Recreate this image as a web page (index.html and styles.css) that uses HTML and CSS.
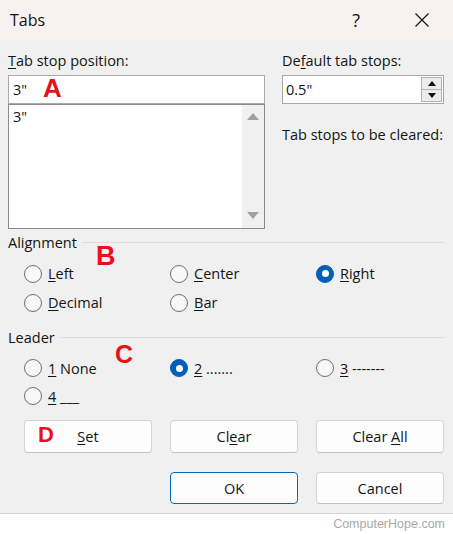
FILE: index.html
```html
<!DOCTYPE html>
<html lang="en">
    <head>
        <meta charset="UTF-8">
        <meta name="viewport" content="width=device-width, initial-scale=1.0">
        <title>Tabs</title>
        <link rel="stylesheet" href="styles.css">
    </head>
    <body>
        <div class="dialog">
            <div class="titlebar">
                <span class="title">Tabs</span>
                <span class="help">?</span>
                <span class="close">
                    <svg width="16" height="16" viewBox="0 0 16 16">
                        <path d="M1.5 1.5 L14.5 14.5 M14.5 1.5 L1.5 14.5" stroke="#1a1a1a" stroke-width="1.3" fill="none"/>
                    </svg>
                </span>
            </div>

            <div class="content">
                <div class="top">
                    <div class="col">
                        <div class="label"><u>T</u>ab stop position:</div>
                        <div class="textbox">3"</div>
                        <div class="listbox">
                            <div class="list-items">3"</div>
                            <div class="scrollbar">
                                <span class="tri-up"></span>
                                <span class="tri-down"></span>
                            </div>
                        </div>
                    </div>
                    <div class="col">
                        <div class="label">De<u>f</u>ault tab stops:</div>
                        <div class="spin">
                            <span class="spin-value">0.5"</span>
                            <div class="spin-buttons">
                                <span class="spin-btn"><span class="tri-up small"></span></span>
                                <span class="spin-btn"><span class="tri-down small"></span></span>
                            </div>
                        </div>
                        <div class="label cleared">Tab stops to be cleared:</div>
                    </div>
                </div>

                <div class="group-head"><span>Alignment</span><span class="rule"></span></div>
                <div class="radio-grid align-grid">
                    <div class="radio"><span class="dot"></span><span><u>L</u>eft</span></div>
                    <div class="radio"><span class="dot"></span><span><u>C</u>enter</span></div>
                    <div class="radio"><span class="dot checked"></span><span><u>R</u>ight</span></div>
                    <div class="radio"><span class="dot"></span><span><u>D</u>ecimal</span></div>
                    <div class="radio"><span class="dot"></span><span><u>B</u>ar</span></div>
                </div>

                <div class="group-head leader-head"><span>Leader</span><span class="rule"></span></div>
                <div class="radio-grid leader-grid">
                    <div class="radio"><span class="dot"></span><span><u>1</u> None</span></div>
                    <div class="radio"><span class="dot checked"></span><span><u>2</u> .......</span></div>
                    <div class="radio"><span class="dot"></span><span><u>3</u> -------</span></div>
                    <div class="radio"><span class="dot"></span><span><u>4</u> ___</span></div>
                </div>

                <div class="button-row">
                    <button class="btn"><u>S</u>et</button>
                    <button class="btn">Cl<u>e</u>ar</button>
                    <button class="btn">Clear <u>A</u>ll</button>
                </div>
                <div class="button-row ok-row">
                    <span></span>
                    <button class="btn primary">OK</button>
                    <button class="btn">Cancel</button>
                </div>
            </div>

            <div class="footer">ComputerHope.com</div>

            <!-- red callout letters drawn over the screenshot -->
            <span class="mark mark-a">A</span>
            <span class="mark mark-b">B</span>
            <span class="mark mark-c">C</span>
            <span class="mark mark-d">D</span>
        </div>
    </body>
</html>
```

FILE: styles.css
```css
*,
*::before,
*::after {
    box-sizing: border-box;
}

body {
    margin: 0;
    padding: 0;
    background-color: #f0f0f0;
    font-family: "Open Sans", "Noto Sans", sans-serif;
    font-size: 14.5px;
    color: #141414;
    overflow: hidden;
}

u {
    text-decoration-thickness: 1px;
    text-underline-offset: 2px;
}

.dialog {
    position: relative;
    width: 453px;
    height: 534px;
}

/* title bar */
.titlebar {
    display: flex;
    align-items: center;
    height: 40px;
    padding: 0 8px 0 10px;
    background-color: #f8f1f1;
}

.title {
    flex: 1;
    font-size: 16px;
}

.help {
    font-size: 18px;
    margin-right: 54px;
}

.close {
    display: flex;
    margin-right: 15px;
}

/* main area */
.content {
    padding: 11px 8px 9px;
    background-color: #f0f0f0;
}

.top {
    display: grid;
    grid-template-columns: 257px 162px;
    column-gap: 17px;
}

.label {
    height: 20px;
    line-height: 20px;
    margin-bottom: 4px;
    white-space: nowrap;
}

.label.cleared {
    margin-top: 21px;
}

.textbox {
    height: 29px;
    line-height: 27px;
    padding-left: 4px;
    background: #fff;
    border: 1px solid #a8a8a8;
}

.listbox {
    display: flex;
    height: 125px;
    background: #fff;
    border: 1px solid #8a8a8a;
}

.list-items {
    flex: 1;
    padding: 2px 0 0 4px;
    line-height: 20px;
}

.scrollbar {
    width: 22px;
    display: flex;
    flex-direction: column;
    justify-content: space-between;
    align-items: center;
    padding: 8px 0 9px;
    background: #f0f0f0;
}

.tri-up,
.tri-down {
    width: 0;
    height: 0;
    border-left: 6px solid transparent;
    border-right: 6px solid transparent;
}

.tri-up {
    border-bottom: 7px solid #a0a0a0;
}

.tri-down {
    border-top: 7px solid #a0a0a0;
}

.tri-up.small {
    border-left-width: 4px;
    border-right-width: 4px;
    border-bottom: 5px solid #111;
}

.tri-down.small {
    border-left-width: 4px;
    border-right-width: 4px;
    border-top: 5px solid #111;
}

.spin {
    display: flex;
    align-items: center;
    height: 29px;
    background: #fff;
    border: 1px solid #a8a8a8;
}

.spin-value {
    flex: 1;
    padding-left: 3px;
}

.spin-buttons {
    display: flex;
    flex-direction: column;
    width: 21px;
    margin-right: 1px;
    height: 25px;
}

.spin-btn {
    flex: 1;
    display: flex;
    align-items: center;
    justify-content: center;
    background: #ececec;
    border: 1px solid #b4b4b4;
}

.spin-btn + .spin-btn {
    border-top: none;
}

/* group headers */
.group-head {
    display: flex;
    align-items: center;
    height: 20px;
    margin-top: 3px;
}

.group-head .rule {
    flex: 1;
    height: 1px;
    margin-left: 5px;
    background: #dcdcdc;
}

.leader-head {
    margin-top: 10px;
}

/* radios */
.radio-grid {
    display: grid;
    grid-template-columns: 146px 146px 1fr;
    margin-top: 7px;
    padding-left: 16px;
}

.align-grid {
    grid-auto-rows: 29px;
}

.leader-grid {
    grid-auto-rows: 28px;
}

.radio {
    display: flex;
    align-items: center;
    gap: 6px;
    white-space: nowrap;
}

.dot {
    position: relative;
    width: 18px;
    height: 18px;
    border-radius: 50%;
    border: 1px solid #6e6e6e;
    background: #f8f8f8;
}

.dot.checked {
    background: #005fb8;
    border-color: #005fb8;
}

.dot.checked::after {
    content: "";
    position: absolute;
    left: 4.5px;
    top: 4.5px;
    width: 7px;
    height: 7px;
    border-radius: 50%;
    background: #fff;
}

/* buttons */
.button-row {
    display: grid;
    grid-template-columns: 128px 128px 128px;
    column-gap: 18px;
    margin-top: 10px;
    padding-left: 16px;
}

.ok-row {
    margin-top: 19px;
}

.btn {
    height: 33px;
    font-family: inherit;
    font-size: 14.5px;
    color: #141414;
    background: #fdfdfd;
    border: 1px solid #d2d2d2;
    border-bottom-color: #c2c2c2;
    border-radius: 4px;
    padding: 0;
}

.ok-row .btn {
    height: 32px;
}

.btn.primary {
    border-color: #0067c0;
}

/* footer */
.footer {
    height: 21px;
    line-height: 20px;
    padding-right: 8px;
    text-align: right;
    background: #fff;
    border-top: 1px solid #d6d6d6;
    font-family: "Liberation Sans", Arial, sans-serif;
    font-size: 12.5px;
    color: #a8a8a8;
}

/* callout letters */
.mark {
    position: absolute;
    font-family: "Liberation Sans", Arial, sans-serif;
    font-weight: bold;
    line-height: 1;
    color: #e8101a;
}

.mark-a {
    left: 43px;
    top: 75px;
    font-size: 26px;
}

.mark-b {
    left: 96px;
    top: 243px;
    font-size: 27px;
}

.mark-c {
    left: 115px;
    top: 342px;
    font-size: 25px;
}

.mark-d {
    left: 38px;
    top: 424px;
    font-size: 22px;
}
```
